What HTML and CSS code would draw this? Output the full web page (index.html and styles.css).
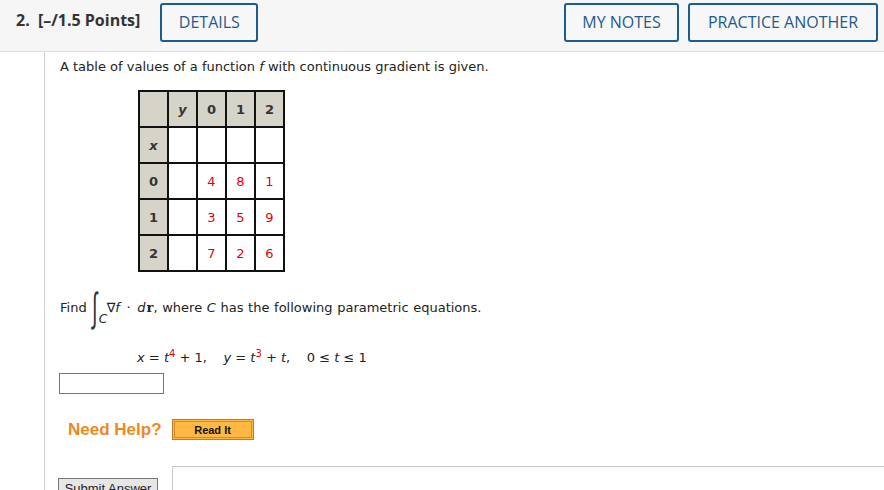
FILE: index.html
```
<!DOCTYPE html>
<html>
<head>
<meta charset="utf-8">
<link rel="stylesheet" href="styles.css">
</head>
<body>
<div class="header">
  <div class="points"><span class="num">2.</span> [–/1.5 Points]</div>
  <button class="hbtn details">DETAILS</button>
  <div class="spacer"></div>
  <button class="hbtn notes">MY NOTES</button>
  <button class="hbtn practice">PRACTICE ANOTHER</button>
</div>
<div class="content">
  <p class="intro">A table of values of a function <i>f</i> with continuous gradient is given.</p>
  <table class="vals">
    <tr><th></th><th><i>y</i></th><th>0</th><th>1</th><th>2</th></tr>
    <tr><th><i>x</i></th><td></td><td></td><td></td><td></td></tr>
    <tr><th>0</th><td></td><td>4</td><td>8</td><td>1</td></tr>
    <tr><th>1</th><td></td><td>3</td><td>5</td><td>9</td></tr>
    <tr><th>2</th><td></td><td>7</td><td>2</td><td>6</td></tr>
  </table>
  <div class="find">
    <span>Find</span>
    <span class="integral"><span class="int">∫</span><span class="sub"><i>C</i></span></span>
    <span class="expr">∇<i>f</i> <span class="dot">·</span> <i>d</i><b class="r">r</b>, where <i>C</i> has the following parametric equations.</span>
  </div>
  <div class="eq"><i>x</i> = <i>t</i><sup>4</sup> + 1,&nbsp;&nbsp;&nbsp; <i>y</i> = <i>t</i><sup>3</sup> + <i>t</i>,&nbsp;&nbsp;&nbsp; 0 ≤ <i>t</i> ≤ 1</div>
  <div class="answer"></div>
  <div class="help">
    <span class="need">Need Help?</span>
    <button class="readit">Read It</button>
  </div>
  <div class="bottom">
    <button class="submit">Submit Answer</button>
    <div class="box"></div>
  </div>
</div>
</body>
</html>
```
FILE: styles.css
```
html, body { margin: 0; padding: 0; background: #fff; }
body { width: 884px; height: 490px; overflow: hidden; font-family: "DejaVu Sans", Verdana, sans-serif; }
.header {
  background: #f6f6f6; border-bottom: 1px solid #dedede;
  display: flex; align-items: center; box-sizing: border-box; height: 52px;
  padding: 0 6px 11px 16px;
}
.points { font-family: "Open Sans", sans-serif; font-weight: 700; font-size: 16px; color: #333; }
.points .num { margin-right: 4px; }
.hbtn {
  font-family: "Open Sans", sans-serif; font-size: 16px; font-weight: 500; color: #1e5a8c; background: #f7f7f7;
  border: 2px solid #1b5d91; border-radius: 3px; height: 39px; box-sizing: border-box; padding: 0 14px;
  margin-top: 4px;
}
.details { margin-left: 20px; width: 98px; }
.spacer { flex: 1; }
.notes { width: 115px; margin-right: 9px; }
.practice { width: 190px; }
.content { margin-left: 44px; border-left: 1px solid #d0d0d0; padding-left: 15px; height: 440px; }
.intro { margin: 0; padding-top: 7px; font-size: 13px; color: #222; }
.vals { border-collapse: collapse; margin-left: 78px; margin-top: 16px; }
.vals th, .vals td { border: 2px solid #111; width: 27px; height: 34px; padding: 0; text-align: center; font-size: 13px; }
.vals th { background: #d6d3c8; color: #333; font-weight: 700; }
.vals td { color: #e8000b; }
.find { display: flex; align-items: center; margin-top: 12px; font-size: 13px; color: #222; }
.integral { position: relative; width: 20px; height: 46px; display: inline-block; }
.int { position: absolute; left: 5px; top: 3px; font-size: 26px; line-height: 26px; font-family: "DejaVu Sans", sans-serif; font-weight: 200; transform: scale(0.75, 1.55); transform-origin: 0 0; color: #333; }
.sub { position: absolute; left: 12px; top: 28px; font-size: 12px; }
.dot { margin: 0 2px; }
.r { font-family: "DejaVu Serif", serif; margin-left: 1px; }
.expr { word-spacing: 0.5px; }
.eq { margin-left: 77px; margin-top: 18px; font-size: 13px; color: #222; }
.eq sup { color: #e8000b; font-size: 10px; }
.answer { width: 103px; height: 19px; border: 1px solid #767676; margin-top: 8px; margin-left: -1px; }
.help { display: flex; align-items: center; margin-top: 25px; margin-left: 8px; }
.need { font-family: "Liberation Sans", Arial, sans-serif; font-weight: 700; font-size: 17px; color: #f0891b; }
.readit {
  margin-left: 10px; width: 82px; height: 21px; background: #ffb843; border: 1px solid #c47a25;
  box-shadow: inset 0 0 0 1px #ffb843, inset 0 0 0 2px #d98b2a; font-family: "Liberation Sans", Arial, sans-serif;
  font-weight: 700; font-size: 11px; color: #111; padding: 0;
}
.bottom { display: flex; align-items: flex-start; margin-top: 26px; }
.submit {
  margin-top: 12px; margin-left: -2px; width: 100px; height: 20px; font-family: "Liberation Sans", Arial, sans-serif;
  font-size: 13px; color: #222; background: #e6e6e6; border: 1px solid #777; padding: 0;
}
.box { margin-left: 14px; flex: 1; height: 40px; border: 1px solid #c8c8c8; border-right: none; }
```
